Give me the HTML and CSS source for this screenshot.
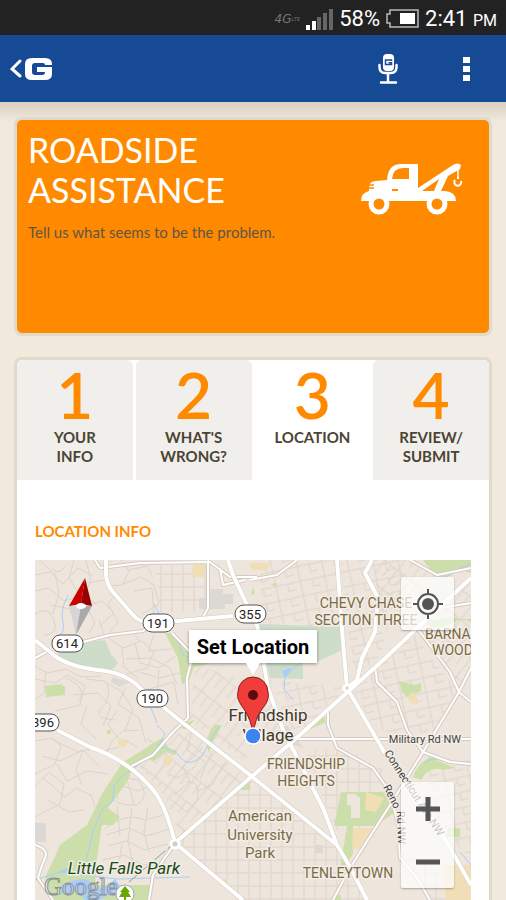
FILE: index.html
```
<!DOCTYPE html>
<html lang="en">
<head>
  <meta charset="UTF-8">
  <meta name="viewport" content="width=device-width, initial-scale=1.0">
  <title>Roadside Assistance</title>
  <link rel="stylesheet" href="styles.css">
</head>
<body>

  <!-- Phone status bar -->
  <div class="status-bar">
    <span class="network">4G<small>LTE</small></span>
    <svg class="signal" width="27" height="22" viewBox="0 0 27 22">
      <path fill="#fff" d="M0 17h4v5H0zM6 13h4v9H6z"/>
      <path fill="#666" d="M11 9h4v13h-4zM17 5h4v17h-4zM23 1h4v21h-4z"/>
    </svg>
    <span>58%</span>
    <svg class="battery" width="33" height="19" viewBox="0 0 33 19">
      <path fill="none" stroke="#bbb" stroke-width="1.500" d="M4 1H32V18H4V14H1V5H4Z"/>
      <path fill="#fff" d="M14 4h15v11H14z"/>
    </svg>
    <span>2:41 <small class="period">PM</small></span>
  </div>

  <!-- App header -->
  <header class="header">
    <a href="#" class="back" aria-label="Back">
      <svg width="42" height="24" viewBox="0 0 42 24">
        <path fill="none" stroke="#fff" stroke-width="3" stroke-linecap="round" d="M10 4L2 12L10 19"/>
        <path fill="#fff" d="M22 1H35Q42 1 42 7V8H35Q35 6 33 6H25Q22 6 22 9V15Q22 18 25 18H32Q35 18 35 15H27V10H42V17Q42 23 35 23H22Q15 23 15 17V7Q15 1 22 1Z"/>
      </svg>
    </a>
    <div class="header-actions">
      <button aria-label="Voice search">
        <svg width="20" height="30" viewBox="0 0 20 30">
          <rect x="5" y="0" width="11" height="17" rx="4" fill="#fff"/>
          <path fill="none" stroke="#164a95" stroke-width="1.500" d="M13.500 7V6H7.500V10.500H13.500V8.700H10.500"/>
          <path fill="none" stroke="#fff" stroke-width="2.500" stroke-linecap="round" d="M1.500 11V13Q1.500 19 7 19H13Q18.500 19 18.500 13V11M10 19V28M3 28.500H18"/>
        </svg>
      </button>
      <button aria-label="More options">
        <svg width="7" height="24" viewBox="0 0 7 24"><path fill="#fff" d="M0 0h7v6H0zM0 9h7v6H0zM0 18h7v6H0z"/></svg>
      </button>
    </div>
  </header>

  <main class="content">
    <section class="card intro">
      <div>
        <h1>Roadside<br>Assistance</h1>
        <p>Tell us what seems to be the problem.</p>
      </div>
      <svg class="truck" width="102" height="52" viewBox="0 0 102 52">
        <path fill="#fff" fill-rule="evenodd" d="M26 17Q27 1 40 1H57V25L92 2Q97-1 100 2L99 6L87 13L80 28H84Q95 29 95 38H0Q0 30 8 28V25Q8 18 15 18ZM31 16H48V5H42Q32 5 31 16ZM31 26V28H37V26ZM61 28H73L78 16Z"/>
        <path stroke="#ff8a00" stroke-width="1.500" d="M6 22H13M6 25H13"/>
        <circle cx="18" cy="41" r="8" fill="#ff8a00" stroke="#fff" stroke-width="5"/>
        <circle cx="76" cy="41" r="8" fill="#ff8a00" stroke="#fff" stroke-width="5"/>
        <path fill="none" stroke="#fff" stroke-width="1.500" d="M97 4V15"/>
        <path fill="none" stroke="#fff" stroke-width="2" d="M97 14V16M94 17A3.500 3.500 0 1 0 100 18"/>
      </svg>
    </section>

    <section class="card form-card">
      <nav class="steps">
        <a href="#" class="step"><strong>1</strong>Your<br>Info</a>
        <a href="#" class="step"><strong>2</strong>What's<br>Wrong?</a>
        <a href="#" class="step active" aria-current="step"><strong>3</strong>Location</a>
        <a href="#" class="step"><strong>4</strong>Review/<br>Submit</a>
      </nav>

      <h2>Location Info</h2>

      <div class="map">
        <svg class="map-tiles" viewBox="0 0 436 340" preserveAspectRatio="xMidYMin slice">
          <defs>
            <pattern id="grid" width="22" height="13" patternUnits="userSpaceOnUse">
              <path class="minor" d="M0 1H22M5 0V13M16 1V13"/>
            </pattern>
            <pattern id="grid-slant" width="25" height="15" patternUnits="userSpaceOnUse" patternTransform="rotate(-12)">
              <path class="minor" d="M0 1H25M5 0V15M17 1V9L25 8"/>
            </pattern>
            <pattern id="grid-diagonal" width="16" height="24" patternUnits="userSpaceOnUse" patternTransform="rotate(38)">
              <path class="minor" d="M0 1H16M4 0V24M12 1V15"/>
            </pattern>
          </defs>
          <rect width="436" height="340" fill="#eee6dd"/>

          <!-- Blocks -->
          <path fill="url(#grid)" d="M215 220L302 287L330 340H208L143 284ZM310 190L350 210L330 270L300 270L270 190ZM365 290L436 330V340H395ZM120 5H175V52H125Z"/>
          <path fill="url(#grid-slant)" d="M225 0H302L308 68H225ZM235 120L312 128L260 178ZM315 125L380 75L424 132L388 190L338 165ZM305 0H375L345 95L320 120ZM390 205H436V300L400 260Z"/>
          <path fill="url(#grid-diagonal)" d="M150 165L215 218L148 278L128 235L105 207L138 180ZM385 70L436 20V112L424 132ZM160 105L232 125L245 165L210 200L155 160ZM338 0H375L402 15L345 60Z"/>
          <path class="minor" d="M0 15L15 12L28 24L43 8L58 16M0 31L14 28L29 41L48 35L62 44M4 0L20 14L24 33L18 54M39 0L34 18L47 39L43 63M16 45L40 50L67 41L79 53L65 66M0 54Q14 45 19 60T9 75M51 0L56 21L48 37M51 23L70 20M30 7Q23 16 17 8M80 35L73 44L83 62L75 72M86 0L94 11L87 25L73 26M88 24L106 17L119 25L124 44L107 54M94 10L112 6L118 17M99 31L117 28L119 56M64 60L70 77M52 47L60 62L54 73"/>
          <path class="minor" d="M73 78L88 88L107 81L119 92L112 108L91 114M87 88L89 107L104 119M100 83L105 103L124 108L140 96M119 75L113 91L137 89M91 99L116 98L135 108L142 124M105 112L124 118L145 113M124 110L122 139M100 75L105 82M110 130L139 122L143 145M0 106L12 113L31 109L46 117L67 116M0 119L20 123L33 115L50 126L45 145L20 151M11 111L9 133L0 139M31 118Q53 128 44 140M51 119L69 121L87 132L98 149L90 171M38 135L63 133L76 146L68 166M52 146L46 164L62 180M72 124Q77 137 67 148T81 160M91 127L83 144L104 158L111 183M82 151L73 164L86 182"/>
          <path class="minor" d="M0 181L17 178L26 186L20 204L0 214M18 180L43 192L60 188M7 196L25 201L48 190L65 207M22 204L32 221L52 211L74 214M0 226L14 212L29 224L25 244L0 257M8 218L30 237L41 228L56 235L60 247M13 240L34 252L48 250M48 190L41 210L47 225M70 196L77 181L88 171L104 170M66 191L82 188L91 180L103 188M83 239Q75 226 90 218L103 220Q116 235 102 245Q82 246 78 238M84 225L103 231L111 227M92 220L99 244M70 269Q90 251 110 260L128 255M71 275L94 268L111 276L134 269M72 286L92 281L109 290L133 284M67 300L89 295L108 305L121 303M82 246L85 276M97 248L93 282L100 312M113 247L109 272L114 292M87 285L83 309"/>
          <path class="minor" d="M157 171L152 190L170 202M168 187L148 207L155 222L139 235M132 214L143 218L161 206M151 222Q166 220 162 240L152 252L135 239M177 191L165 219M112 179L123 185L134 197L126 209M190 202L177 225L163 231"/>
          <path fill="#dcd9d5" d="M176 29H188V34H198V44H190V49H164V38H174ZM0 263H11V282H0ZM77 117L95 122L85 127L76 122ZM253 166L268 188L257 184L246 166ZM280 285H288V293H280Z"/>

          <!-- Parks -->
          <path class="park-soft" d="M22 95L35 85L70 80L76 94L83 103L77 110L32 103ZM223 64L305 67L307 90L282 102L268 103V119L235 118Z"/>
          <path class="park" d="M130 73H139L148 88L158 96L173 104L159 107L155 118L147 125L143 98ZM10 126L27 124V126H30V135L11 137ZM95 198L120 182L128 178L135 190H142L140 195L130 192L118 202L113 198L98 208L92 222L73 248L85 257L78 265L67 265L62 298L60 325H90L116 325L113 340H18L10 318L25 285L52 265L68 232L88 202ZM72 170H76V174H72ZM145 168Q151 161 160 160L151 169ZM172 178L179 165H187L178 182L173 194ZM205 230L215 219V230Z"/>
          <path class="park" d="M364 121L380 125L386 123V131L373 138L367 132ZM269 170L288 152L291 162L276 169ZM388 0H436V13Q424 8 417 14T398 13ZM387 62Q401 72 415 64T436 63V59L412 58ZM306 232H352L360 252L341 266H299ZM378 217Q383 203 395 197L420 208L408 210Q394 205 386 220ZM312 266H318V294L311 305L316 317L305 308ZM413 268H425V277H411ZM298 335L306 335V340H298ZM389 29L384 33L388 36ZM218 27L216 35L220 33ZM235 24L242 23L241 27Z"/>
          <path fill="#f0deb6" d="M158 3H170V17H157ZM215 3H235L232 11L215 9ZM83 182L85 178L93 182L89 188L84 186ZM128 200L129 196H137V202L132 207ZM331 232L349 238L341 252L330 250ZM318 268H340L327 289H317ZM371 137L379 132L384 142L378 144ZM408 305H436V340H411ZM186 320L191 318L192 326L187 324ZM207 121H216V132L208 128Z"/>
          <path fill="#eee6dd" d="M312 234H320L325 238V258H316V245H312Z"/>
          <path fill="#a9cdfb" d="M26 326Q51 313 57 324T80 319Q91 331 76 334L64 340H50L43 331L26 334ZM25 311L35 307V312L25 313ZM247 111L254 108L257 110L250 118Z"/>
          <path class="water" d="M33 35Q25 50 28 62T21 77M119 44L124 53L122 63M140 74L148 95L158 99L152 120M122 165L130 174L122 188L109 201L85 218L79 226L78 241L67 249L62 262L58 271L55 285L50 305M116 148L122 163M122 188Q136 185 145 197T168 195L175 181L184 167M257 110L266 103M250 118L249 129L258 140M389 203Q401 195 415 202H436M397 14Q412 22 421 10L436 4M425 292L436 305M0 320L25 312L82 319L155 317"/>

          <!-- Roads, outline first and the white line over it -->
          <g id="roads">
            <path class="edge" d="M60 0L65 8L105 3L175 2L195 17H222M173 0V48L168 57M48 82L75 75L108 71L115 65M137 73L158 95L152 118L153 158L138 172L118 195L95 207M0 98L15 90M215 20L242 15L262 0M185 8L188 25L210 20M340 105L342 122L362 142L372 170L388 192L415 202L436 204M293 148V165L302 188L338 208L355 232L363 265L365 298L382 318L395 340M258 179H436M375 0L402 15L436 8M382 68L415 112L424 132L388 192L355 245L315 308L298 340M436 108L424 132L436 142M405 48L436 43M0 285Q14 289 10 298T3 318L18 340M140 283L118 315L114 340"/>
            <path class="road" d="M60 0L65 8L105 3L175 2L195 17H222M173 0V48L168 57M48 82L75 75L108 71L115 65M137 73L158 95L152 118L153 158L138 172L118 195L95 207M0 98L15 90M215 20L242 15L262 0M185 8L188 25L210 20M340 105L342 122L362 142L372 170L388 192L415 202L436 204M293 148V165L302 188L338 208L355 232L363 265L365 298L382 318L395 340M258 179H436M375 0L402 15L436 8M382 68L415 112L424 132L388 192L355 245L315 308L298 340M436 108L424 132L436 142M405 48L436 43M0 285Q14 289 10 298T3 318L18 340M140 283L118 315L114 340"/>
            <path class="edge wide" d="M71 0V15Q72 25 78 32L98 55Q106 64 120 63L198 56M0 80L15 92Q30 106 62 110Q90 112 105 128L148 163L215 215L302 285L315 307L332 340M22 170L55 187Q98 202 122 235Q133 253 140 283L208 340M140 283L215 218L257 182L345 103L382 68L436 18M193 0L198 15L212 45L222 65L233 128L248 170L288 248L302 285M302 0L308 82L312 128L348 190L402 265L436 325M337 0L330 13L343 38L340 72L327 98L322 120L312 128"/>
            <path class="road wide" d="M71 0V15Q72 25 78 32L98 55Q106 64 120 63L198 56M0 80L15 92Q30 106 62 110Q90 112 105 128L148 163L215 215L302 285L315 307L332 340M22 170L55 187Q98 202 122 235Q133 253 140 283L208 340M140 283L215 218L257 182L345 103L382 68L436 18M193 0L198 15L212 45L222 65L233 128L248 170L288 248L302 285M302 0L308 82L312 128L348 190L402 265L436 325M337 0L330 13L343 38L340 72L327 98L322 120L312 128"/>
          </g>
          <path fill="none" stroke="#999" stroke-dasharray="14 3" d="M94 322L137 285"/>
          <g fill="#ccc" stroke="#fff" stroke-width="3"><circle cx="140" cy="284" r="4"/><circle cx="312" cy="128" r="3"/></g>

          <!-- Route shields -->
          <g class="shield">
            <rect x="17" y="75" width="31" height="17" rx="8"/><text x="32" y="88">614</text>
            <rect x="108" y="54" width="31" height="18" rx="9"/><text x="123" y="68">191</text>
            <rect x="200" y="45" width="31" height="18" rx="9"/><text x="215" y="59">355</text>
            <rect x="102" y="130" width="31" height="17" rx="8"/><text x="117" y="143">190</text>
            <rect x="-7" y="154" width="31" height="17" rx="8"/><text x="8" y="167">396</text>
          </g>

          <!-- Place names -->
          <g class="place area">
            <text x="331" y="48">CHEVY CHASE</text><text x="331" y="65">SECTION THREE</text>
            <text x="390" y="79" text-anchor="start">BARNABY</text><text x="397" y="95" text-anchor="start">WOODS</text>
            <text x="271" y="209">FRIENDSHIP</text><text x="271" y="226">HEIGHTS</text>
            <text x="313" y="318">TENLEYTOWN</text>
          </g>
          <g class="place">
            <text x="225" y="261">American</text><text x="225" y="280">University</text><text x="225" y="298">Park</text>
          </g>
          <g class="place town"><text x="233" y="161">Friendship</text><text x="233" y="181">Village</text></g>
          <g class="place street">
            <text x="390" y="183">Military Rd NW</text>
            <text transform="translate(349 193) rotate(57)" text-anchor="start">Connecticut Ave NW</text>
            <text transform="translate(348 227) rotate(63)" text-anchor="start">Reno</text>
            <text transform="translate(362 251) rotate(88)" text-anchor="start">Rd NW</text>
          </g>
          <text class="google" x="9" y="335">Google</text>
          <circle cx="90" cy="334" r="9" fill="#fff" stroke="#aaa"/>
          <path fill="#65a900" d="M90 326L95 332H93L96 337H91V340H89V337H84L87 332H85Z"/>
          <text class="place park-name" x="89" y="314">Little Falls Park</text>

          <!-- Compass -->
          <path fill="#c80000" d="M50 18L34 46L46 44Z"/><path fill="#900" d="M50 18L57 46L46 44Z"/>
          <path fill="#d5d5d5" d="M34 46H47L41 75Z"/><path fill="#aaa" d="M46 46H57L41 75Z"/>
          <ellipse cx="46" cy="46" rx="5" ry="3" fill="#fff"/>

          <!-- Marker -->
          <path fill="#ef3e3a" stroke="#8e1a1a" d="M218 174Q216 159 209 149C202 140 202 135 203 132A15 15 0 0 1 233 132C234 137 233 142 227 149Q220 159 218 174Z"/>
          <circle cx="218" cy="135" r="5" fill="#5b0c0e"/>
          <circle cx="218" cy="176" r="8" fill="#3f83f1" stroke="#fff" stroke-width="1.500"/>
        </svg>

        <button class="set-location">Set Location</button>
        <button class="map-button locate" aria-label="My location">
          <svg width="30" height="30" viewBox="0 0 30 30">
            <circle cx="15" cy="15" r="6" fill="#555"/>
            <path fill="none" stroke="#555" stroke-width="2" d="M15 5A10 10 0 0 1 15 25A10 10 0 0 1 15 5M15 0V5M15 25V30M0 15H5M25 15H30"/>
          </svg>
        </button>
        <div class="zoom">
          <button class="map-button" aria-label="Zoom in"><svg width="24" height="24" viewBox="0 0 24 24"><path fill="none" stroke="#555" stroke-width="5" d="M12 0V24M0 12H24"/></svg></button>
          <button class="map-button" aria-label="Zoom out"><svg width="24" height="24" viewBox="0 0 24 24"><path fill="none" stroke="#555" stroke-width="5" d="M0 12H24"/></svg></button>
        </div>
      </div>
    </section>
  </main>

</body>
</html>
```
FILE: styles.css
```
* {
  box-sizing: border-box;
}
body {
  margin: 0;
  height: 100vh;
  display: flex;
  flex-direction: column;
  overflow: hidden;
  font-family: Lato, sans-serif;
  background-color: #f0e9dc;
}
h1, h2, p {
  margin: 0;
}
button {
  padding: 0;
  border: none;
  background: none;
  cursor: pointer;
}
svg {
  display: block;
}

/* Status bar */
.status-bar {
  display: flex;
  flex: none;
  align-items: center;
  justify-content: flex-end;
  gap: 6px;
  height: 35px;
  padding: 2px 9px 0 0;
  font-family: Roboto, sans-serif;
  font-size: 22px;
  color: #fff;
  background-color: #222;
}
.network {
  display: flex;
  align-items: center;
  font-family: "DejaVu Sans", sans-serif;
  font-size: 12px;
  font-style: oblique;
  color: #777;
}
.network small {
  font-size: 5px;
}
.period {
  font-size: 16px;
}

/* Header */
.header {
  display: flex;
  flex: none;
  align-items: center;
  justify-content: space-between;
  height: 67px;
  padding: 0 36px 0 10px;
  background-color: #164a95;
}
.header-actions {
  display: flex;
  align-items: center;
  gap: 65px;
}

/* Cards */
.content {
  display: flex;
  flex: 1;
  flex-direction: column;
  gap: 21px;
  min-height: 0;
  padding: 15px 14px 0;
  background: linear-gradient(#d8d1c3, #f0e9dc 20px);
}
.card {
  border: 3px solid #e0dacb;
  border-radius: 8px;
}
.intro {
  display: flex;
  flex: none;
  align-items: flex-start;
  justify-content: space-between;
  min-height: 219px;
  padding: 10px 26px 10px 11px;
  background-color: #ff8a00;
}
h1 {
  font-size: 34px;
  font-weight: 400;
  line-height: 40px;
  text-transform: uppercase;
  color: #fff;
}
.intro p {
  margin-top: 12px;
  font-size: 15px;
  line-height: 20px;
  color: #5e5547;
}
.truck {
  margin-top: 33px;
}
.form-card {
  display: flex;
  flex: 1;
  flex-direction: column;
  min-height: 0;
  border-bottom: none;
  border-radius: 8px 8px 0 0;
  background-color: #fff;
}

/* Steps */
.steps {
  display: grid;
  grid-template-columns: repeat(4, 1fr);
  gap: 3px;
}
.step {
  height: 120px;
  padding-top: 2px;
  border-radius: 6px 6px 0 0;
  font-size: 15px;
  font-weight: 700;
  line-height: 19px;
  text-align: center;
  text-decoration: none;
  text-transform: uppercase;
  color: #4b4433;
  background-color: #f1efec;
}
.step strong {
  display: block;
  font-size: 64px;
  font-weight: 600;
  line-height: 66px;
  color: #ff8a00;
}
.step.active {
  background-color: #fff;
}
h2 {
  margin: 41px 18px 19px;
  font-size: 15px;
  line-height: 20px;
  text-transform: uppercase;
  color: #ff8a00;
}

/* Map */
.map {
  position: relative;
  flex: 1;
  min-height: 0;
  margin: 0 18px;
  overflow: hidden;
  background-color: #eee6dd;
}
.map-tiles {
  width: 100%;
  height: 100%;
}
.minor {
  fill: none;
  stroke: #dcd4cc;
  stroke-width: 1;
}
.park {
  fill: #ccdfaa;
}
.park-soft {
  fill: #cdddc9;
}
.water {
  fill: none;
  stroke: #a9cdfb;
  stroke-width: 1;
}
.road, .edge {
  fill: none;
  stroke: #fff;
  stroke-width: 2;
  stroke-linejoin: round;
}
.road.wide {
  stroke-width: 4;
}
.edge {
  stroke: #d3cbc2;
  stroke-width: 4;
}
.edge.wide {
  stroke-width: 5;
}
.shield rect {
  fill: #fff;
  stroke: #555;
  stroke-width: 1;
}
.shield text {
  font: 13px Roboto, sans-serif;
  text-anchor: middle;
  fill: #222;
}
.place {
  font: 15px Roboto, sans-serif;
  text-anchor: middle;
  fill: #7b6a45;
  stroke: #f3ede6;
  stroke-width: 3;
  stroke-linejoin: round;
  paint-order: stroke;
}
.place.area {
  font-size: 14px;
}
.place.town {
  font-size: 17px;
  fill: #40372b;
}
.place.street {
  font-size: 11px;
  fill: #444;
}
.place.park-name {
  font-size: 17px;
  font-style: italic;
  fill: #174b19;
}
.google {
  font: 25px "Liberation Serif", serif;
  fill: #eee;
  fill-opacity: 0.4;
  stroke: #8b9298;
}

/* Map controls */
.set-location {
  position: absolute;
  top: 70px;
  left: calc(50% - 64px);
  width: 128px;
  height: 33px;
  font-family: Roboto, sans-serif;
  font-size: 20px;
  font-weight: 700;
  color: #000;
  background-color: #fff;
  box-shadow: 0 1px 3px rgba(0, 0, 0, 0.4);
}
.set-location::after {
  content: "";
  position: absolute;
  top: 100%;
  left: calc(50% - 7px);
  border: 7px solid transparent;
  border-top: 12px solid #fff;
  border-bottom: none;
}
.map-button {
  display: flex;
  align-items: center;
  justify-content: center;
  width: 53px;
  height: 53px;
}
.locate, .zoom {
  position: absolute;
  right: 17px;
  border-radius: 2px;
  background-color: rgba(255, 255, 255, 0.7);
  box-shadow: 0 1px 2px rgba(0, 0, 0, 0.3);
}
.locate {
  top: 17px;
}
.zoom {
  bottom: 12px;
}
```
